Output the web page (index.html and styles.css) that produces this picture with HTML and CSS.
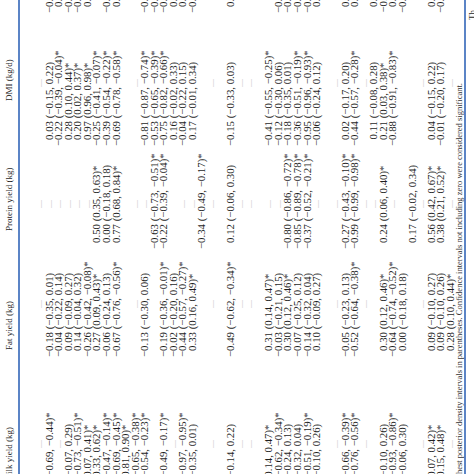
FILE: index.html
```html
<!DOCTYPE html>
<html>
<head>
<meta charset="utf-8">
<link rel="stylesheet" href="styles.css">
</head>
<body>
<div class="page">
  <div class="sheet">
    <div class="head">
      <div class="c1"><span class="h">Milk yield (kg)</span></div>
      <div class="c2"><span class="h">Fat yield (kg)</span></div>
      <div class="c3"><span class="h">Protein yield (kg)</span></div>
      <div class="c4"><span class="h">DMI (kg/d)</span></div>
      <div class="c5"><span class="h">RFI (kg/d)</span></div>
    </div>
    <div class="rule"></div>
    <div class="body">
      <div class="row"><div class="c1"><span class="d">—</span></div><div class="c2"><span class="d">—</span></div><div class="c3"><span class="d">—</span></div><div class="c4"><span class="d">—</span></div><div class="c5"></div></div>
      <div class="row"><div class="c1"><span class="e">−0.57</span> (−0.69, −0.44)*</div><div class="c2"><span class="e">−0.18</span> (−0.35, 0.01)</div><div class="c3"><span class="d">—</span></div><div class="c4"><span class="e">0.03</span> (−0.15, 0.22)</div><div class="c5"><span class="e">−0.41</span> (−0.57, −0.23)*</div></div>
      <div class="row"><div class="c1"><span class="d">—</span></div><div class="c2"><span class="e">−0.04</span> (−0.22, 0.14)</div><div class="c3"><span class="d">—</span></div><div class="c4"><span class="e">−0.22</span> (−0.39, −0.04)*</div><div class="c5"><span class="e">0.52</span> (0.37, 0.65)*</div></div>
      <div class="row"><div class="c1"><span class="e">0.11</span> (−0.07, 0.29)</div><div class="c2"><span class="e">0.09</span> (−0.09, 0.27)</div><div class="c3"><span class="d">—</span></div><div class="c4"><span class="e">0.28</span> (0.10, 0.44)*</div><div class="c5"><span class="e">−0.23</span> (−0.40, −0.05)*</div></div>
      <div class="row"><div class="c1"><span class="e">−0.63</span> (−0.73, −0.51)*</div><div class="c2"><span class="e">0.14</span> (−0.04, 0.32)</div><div class="c3"><span class="d">—</span></div><div class="c4"><span class="e">0.20</span> (0.02, 0.37)*</div><div class="c5"><span class="e">−0.31</span> (−0.47, −0.13)*</div></div>
      <div class="row"><div class="c1"><span class="e">0.25</span> (0.07, 0.41)*</div><div class="c2"><span class="e">−0.26</span> (−0.42, −0.08)*</div><div class="c3"><span class="d">—</span></div><div class="c4"><span class="e">0.97</span> (0.96, 0.98)*</div><div class="c5"><span class="e">0.08</span> (−0.10, 0.26)</div></div>
      <div class="row"><div class="c1"><span class="e">0.49</span> (0.33, 0.62)*</div><div class="c2"><span class="e">0.27</span> (0.09, 0.43)*</div><div class="c3"><span class="e">0.50</span> (0.35, 0.63)*</div><div class="c4"><span class="e">−0.25</span> (−0.41, −0.07)*</div><div class="c5"></div></div>
      <div class="row"><div class="c1"><span class="e">−0.31</span> (−0.47, −0.14)*</div><div class="c2"><span class="e">−0.06</span> (−0.24, 0.13)</div><div class="c3"><span class="e">0.00</span> (−0.18, 0.18)</div><div class="c4"><span class="e">−0.39</span> (−0.54, −0.22)*</div><div class="c5"><span class="e">−0.12</span> (−0.30, 0.07)</div></div>
      <div class="row"><div class="c1"><span class="e">−0.58</span> (−0.69, −0.45)*</div><div class="c2"><span class="e">−0.67</span> (−0.76, −0.56)*</div><div class="c3"><span class="e">0.77</span> (0.68, 0.84)*</div><div class="c4"><span class="e">−0.69</span> (−0.78, −0.58)*</div><div class="c5"><span class="e">0.06</span> (−0.12, 0.24)</div></div>
      <div class="row"><div class="c1"><span class="e">0.86</span> (0.81, 0.90)*</div><div class="c2"></div><div class="c3"></div><div class="c4"></div><div class="c5"></div></div>
      <div class="row"><div class="c1"><span class="e">−0.52</span> (−0.65, −0.38)*</div><div class="c2"><span class="d">—</span></div><div class="c3"><span class="d">—</span></div><div class="c4"><span class="d">—</span></div><div class="c5"></div></div>
      <div class="row"><div class="c1"><span class="e">−0.39</span> (−0.54, −0.23)*</div><div class="c2"><span class="e">−0.13</span> (−0.30, 0.06)</div><div class="c3"><span class="d">—</span></div><div class="c4"><span class="e">−0.81</span> (−0.87, −0.74)*</div><div class="c5"><span class="e">−0.74</span> (−0.82, −0.64)*</div></div>
      <div class="row"><div class="c1"></div><div class="c2"></div><div class="c3"><span class="e">−0.63</span> (−0.73, −0.51)*</div><div class="c4"><span class="e">−0.53</span> (−0.65, −0.39)*</div><div class="c5"><span class="e">−0.45</span> (−0.59, −0.29)*</div></div>
      <div class="row"><div class="c1"><span class="e">−0.33</span> (−0.49, −0.17)*</div><div class="c2"><span class="e">−0.19</span> (−0.36, −0.01)*</div><div class="c3"><span class="e">−0.22</span> (−0.39, −0.04)*</div><div class="c4"><span class="e">−0.75</span> (−0.82, −0.66)*</div><div class="c5"><span class="e">−0.28</span> (−0.44, −0.10)*</div></div>
      <div class="row"><div class="c1"><span class="d">—</span></div><div class="c2"><span class="e">−0.02</span> (−0.20, 0.16)</div><div class="c3"></div><div class="c4"><span class="e">0.16</span> (−0.02, 0.33)</div><div class="c5"><span class="e">0.21</span> (0.03, 0.38)*</div></div>
      <div class="row"><div class="c1"><span class="e">−0.96</span> (−0.97, −0.95)*</div><div class="c2"><span class="e">−0.44</span> (−0.57, −0.27)*</div><div class="c3"><span class="d">—</span></div><div class="c4"><span class="e">−0.04</span> (−0.22, 0.15)</div><div class="c5"><span class="e">0.24</span> (0.06, 0.41)*</div></div>
      <div class="row"><div class="c1"><span class="e">−0.17</span> (−0.35, 0.01)</div><div class="c2"><span class="e">0.33</span> (0.16, 0.49)*</div><div class="c3"><span class="d">—</span></div><div class="c4"><span class="e">0.17</span> (−0.01, 0.34)</div><div class="c5"><span class="e">−0.42</span> (−0.57, −0.25)*</div></div>
      <div class="row"><div class="c1"></div><div class="c2"></div><div class="c3"><span class="e">−0.34</span> (−0.49, −0.17)*</div><div class="c4"></div><div class="c5"></div></div>
      <div class="row"><div class="c1"><span class="d">—</span></div><div class="c2"><span class="d">—</span></div><div class="c3"><span class="d">—</span></div><div class="c4"><span class="d">—</span></div><div class="c5"></div></div>
      <div class="row"><div class="c1"></div><div class="c2"></div><div class="c3"></div><div class="c4"></div><div class="c5"></div></div>
      <div class="row"><div class="c1"><span class="e">0.04</span> (−0.14, 0.22)</div><div class="c2"><span class="e">−0.49</span> (−0.62, −0.34)*</div><div class="c3"><span class="e">0.12</span> (−0.06, 0.30)</div><div class="c4"><span class="e">−0.15</span> (−0.33, 0.03)</div><div class="c5"><span class="e">0.41</span> (0.25, 0.56)*</div></div>
      <div class="row"><div class="c1"><span class="d">—</span></div><div class="c2"><span class="d">—</span></div><div class="c3"><span class="d">—</span></div><div class="c4"><span class="d">—</span></div><div class="c5"></div></div>
      <div class="row"><div class="c1"><span class="d">—</span></div><div class="c2"><span class="d">—</span></div><div class="c3"><span class="d">—</span></div><div class="c4"><span class="d">—</span></div><div class="c5"></div></div>
      <div class="row"><div class="c1"></div><div class="c2"></div><div class="c3"></div><div class="c4"></div><div class="c5"></div></div>
      <div class="row"><div class="c1"><span class="e">0.31</span> (0.14, 0.47)*</div><div class="c2"><span class="e">0.31</span> (0.14, 0.47)*</div><div class="c3"><span class="d">—</span></div><div class="c4"><span class="e">−0.41</span> (−0.55, −0.25)*</div><div class="c5"></div></div>
      <div class="row"><div class="c1"><span class="e">−0.49</span> (−0.62, −0.34)*</div><div class="c2"><span class="e">−0.03</span> (−0.21, 0.15)</div><div class="c3"><span class="d">—</span></div><div class="c4"><span class="e">−0.12</span> (−0.30, 0.06)</div><div class="c5"><span class="e">−0.33</span> (−0.49, −0.15)*</div></div>
      <div class="row"><div class="c1"><span class="e">−0.06</span> (−0.24, 0.13)</div><div class="c2"><span class="e">0.30</span> (0.12, 0.46)*</div><div class="c3"><span class="e">−0.80</span> (−0.86, −0.72)*</div><div class="c4"><span class="e">−0.18</span> (−0.35, 0.01)</div><div class="c5"><span class="e">−0.71</span> (−0.80, −0.60)*</div></div>
      <div class="row"><div class="c1"><span class="e">−0.14</span> (−0.32, 0.04)</div><div class="c2"><span class="e">−0.07</span> (−0.25, 0.12)</div><div class="c3"><span class="e">−0.85</span> (−0.89, −0.78)*</div><div class="c4"><span class="e">−0.36</span> (−0.51, −0.19)*</div><div class="c5"><span class="e">−0.46</span> (−0.60, −0.30)*</div></div>
      <div class="row"><div class="c1"><span class="e">−0.36</span> (−0.51, −0.19)*</div><div class="c2"><span class="e">−0.14</span> (−0.32, 0.04)</div><div class="c3"><span class="e">−0.37</span> (−0.52, −0.21)*</div><div class="c4"><span class="e">−0.95</span> (−0.96, −0.93)*</div><div class="c5"><span class="e">−0.22</span> (−0.39, −0.04)*</div></div>
      <div class="row"><div class="c1"><span class="e">0.08</span> (−0.10, 0.26)</div><div class="c2"><span class="e">0.10</span> (−0.09, 0.27)</div><div class="c3"><span class="d">—</span></div><div class="c4"><span class="e">−0.06</span> (−0.24, 0.12)</div><div class="c5"><span class="e">0.27</span> (0.09, 0.43)*</div></div>
      <div class="row"><div class="c1"></div><div class="c2"></div><div class="c3"></div><div class="c4"></div><div class="c5"></div></div>
      <div class="row"><div class="c1"><span class="d">—</span></div><div class="c2"><span class="d">—</span></div><div class="c3"><span class="d">—</span></div><div class="c4"><span class="d">—</span></div><div class="c5"></div></div>
      <div class="row"><div class="c1"><span class="e">−0.53</span> (−0.66, −0.39)*</div><div class="c2"><span class="e">−0.05</span> (−0.23, 0.13)</div><div class="c3"><span class="e">−0.27</span> (−0.43, −0.10)*</div><div class="c4"><span class="e">0.02</span> (−0.17, 0.20)</div><div class="c5"><span class="e">0.05</span> (−0.13, 0.23)</div></div>
      <div class="row"><div class="c1"><span class="e">−0.67</span> (−0.76, −0.56)*</div><div class="c2"><span class="e">−0.52</span> (−0.64, −0.38)*</div><div class="c3"><span class="e">−0.99</span> (−0.99, −0.98)*</div><div class="c4"><span class="e">−0.44</span> (−0.57, −0.28)*</div><div class="c5"><span class="e">0.09</span> (−0.09, 0.27)</div></div>
      <div class="row"><div class="c1"><span class="d">—</span></div><div class="c2"><span class="d">—</span></div><div class="c3"><span class="d">—</span></div><div class="c4"><span class="d">—</span></div><div class="c5"></div></div>
      <div class="row"><div class="c1"></div><div class="c2"></div><div class="c3"><span class="d">—</span></div><div class="c4"><span class="e">0.11</span> (−0.08, 0.28)</div><div class="c5"><span class="e">0.04</span> (−0.14, 0.22)</div></div>
      <div class="row"><div class="c1"><span class="e">0.08</span> (−0.10, 0.26)</div><div class="c2"><span class="e">0.30</span> (0.12, 0.46)*</div><div class="c3"><span class="e">0.24</span> (0.06, 0.40)*</div><div class="c4"><span class="e">0.21</span> (0.03, 0.38)*</div><div class="c5"><span class="e">−0.11</span> (−0.29, 0.08)</div></div>
      <div class="row"><div class="c1"><span class="e">−0.90</span> (−0.93, −0.86)*</div><div class="c2"><span class="e">−0.64</span> (−0.74, −0.52)*</div><div class="c3"><span class="d">—</span></div><div class="c4"><span class="e">−0.88</span> (−0.91, −0.83)*</div><div class="c5"><span class="e">0.53</span> (0.38, 0.66)*</div></div>
      <div class="row"><div class="c1"><span class="e">0.12</span> (−0.06, 0.30)</div><div class="c2"><span class="e">0.00</span> (−0.18, 0.18)</div><div class="c3"></div><div class="c4"></div><div class="c5"><span class="e">−0.25</span> (−0.42, −0.07)*</div></div>
      <div class="row"><div class="c1"></div><div class="c2"></div><div class="c3"><span class="e">0.17</span> (−0.02, 0.34)</div><div class="c4"></div><div class="c5"></div></div>
      <div class="row"><div class="c1"><span class="d">—</span></div><div class="c2"><span class="d">—</span></div><div class="c3"><span class="d">—</span></div><div class="c4"><span class="d">—</span></div><div class="c5"></div></div>
      <div class="row"><div class="c1"><span class="e">0.25</span> (0.07, 0.42)*</div><div class="c2"><span class="e">0.09</span> (−0.10, 0.27)</div><div class="c3"><span class="e">0.56</span> (0.42, 0.67)*</div><div class="c4"><span class="e">0.04</span> (−0.15, 0.22)</div><div class="c5"><span class="e">0.07</span> (−0.11, 0.25)</div></div>
      <div class="row"><div class="c1"><span class="e">0.32</span> (0.15, 0.48)*</div><div class="c2"><span class="e">0.09</span> (−0.10, 0.26)</div><div class="c3"><span class="e">0.38</span> (0.21, 0.52)*</div><div class="c4"><span class="e">−0.01</span> (−0.20, 0.17)</div><div class="c5"><span class="e">−0.06</span> (−0.24, 0.13)</div></div>
      <div class="row"><div class="c1"><span class="d">—</span></div><div class="c2"><span class="e">0.28</span> (0.10, 0.44)*</div><div class="c3"><span class="d">—</span></div><div class="c4"><span class="d">—</span></div><div class="c5"></div></div>
    </div>
    <div class="note"><span>Estimates are posterior means with 95% highest posterior density intervals in parentheses. Confidence intervals not including zero were considered significant.</span></div>
    <div class="rule"></div>
    <div class="next">Th</div>
  </div>
</div>
</body>
</html>
```
FILE: styles.css
```css
html, body {
  margin: 0;
  padding: 0;
  background: #ffffff;
}

.page {
  width: 474px;
  height: 474px;
  overflow: hidden;
  background: #ffffff;
}

.sheet {
  width: 474px;
  height: 474px;
  transform: rotate(-90deg);
  font-family: "Liberation Serif", "Times New Roman", serif;
  color: #1f1f1f;
}

.head,
.row {
  display: grid;
  grid-template-columns: 151px 108px 103px 133px 80px;
  margin-left: -34px;
  white-space: nowrap;
}

.head {
  height: 18.3px;
  align-items: center;
  font-size: 9px;
  line-height: 10px;
}

.head .c1 .h { margin-left: 26px; }
.head .c2 .h { margin-left: 7px; }
.head .c3 .h { margin-left: 18px; }
.head .c4 .h { margin-left: 45px; }
.head .c5 .h { margin-left: 40px; }

.rule {
  height: 1.5px;
  background: #5b84c6;
}

.body {
  padding-top: 15.4px;
}

.row {
  height: 9.56px;
  line-height: 9.56px;
  font-size: 10.8px;
}

.e {
  display: inline-block;
  width: 25px;
  text-align: right;
}

.d {
  color: #bdbdbd;
  font-size: 8px;
}

.c1 .d { margin-left: 60px; }
.c2 .d { margin-left: 49px; }
.c3 .d { margin-left: 41px; }
.c4 .d { margin-left: 59px; }

.note {
  display: flex;
  justify-content: flex-end;
  width: 391px;
  height: 9px;
  line-height: 9px;
  font-size: 8.5px;
  color: #333333;
  white-space: nowrap;
}

.next {
  padding-left: 454px;
  padding-top: 2px;
  font-size: 9px;
  line-height: 8px;
  white-space: nowrap;
}
```
